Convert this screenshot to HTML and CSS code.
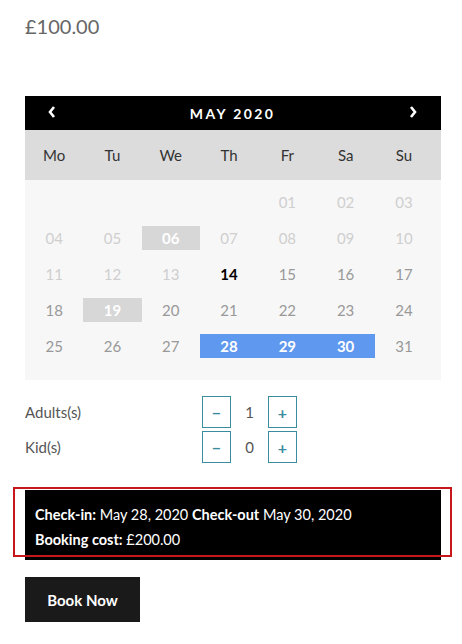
FILE: index.html
```html
<!DOCTYPE html>
<html>
<head>
  <title>Booking</title>
  <link rel="stylesheet" href="styles.css">
</head>
<body>
  <div class="price">£100.00</div>

  <div class="calendar">
    <div class="cal-head">
      <span class="cal-nav">
        <svg width="10" height="14" viewBox="0 0 10 14"><polyline points="7,2 3,7 7,12" fill="none" stroke="#fff" stroke-width="2.6"/></svg>
      </span>
      <span class="cal-month">MAY 2020</span>
      <span class="cal-nav">
        <svg width="10" height="14" viewBox="0 0 10 14"><polyline points="3,2 7,7 3,12" fill="none" stroke="#fff" stroke-width="2.6"/></svg>
      </span>
    </div>
    <div class="cal-week">
      <span>Mo</span><span>Tu</span><span>We</span><span>Th</span><span>Fr</span><span>Sa</span><span>Su</span>
    </div>
    <div class="cal-days">
      <span></span><span></span><span></span><span></span>
      <span class="past">01</span><span class="past">02</span><span class="past">03</span>
      <span class="past">04</span><span class="past">05</span><span class="booked">06</span><span class="past">07</span>
      <span class="past">08</span><span class="past">09</span><span class="past">10</span>
      <span class="past">11</span><span class="past">12</span><span class="past">13</span><span class="today">14</span>
      <span>15</span><span>16</span><span>17</span>
      <span>18</span><span class="booked">19</span><span>20</span><span>21</span>
      <span>22</span><span>23</span><span>24</span>
      <span>25</span><span>26</span><span>27</span><span class="selected">28</span>
      <span class="selected">29</span><span class="selected">30</span><span>31</span>
    </div>
  </div>

  <div class="guests">
    <div class="guest-row">
      <span class="guest-label">Adults(s)</span>
      <div class="counter">
        <button class="qty-btn">&minus;</button>
        <span class="qty">1</span>
        <button class="qty-btn">+</button>
      </div>
    </div>
    <div class="guest-row">
      <span class="guest-label">Kid(s)</span>
      <div class="counter">
        <button class="qty-btn">&minus;</button>
        <span class="qty">0</span>
        <button class="qty-btn">+</button>
      </div>
    </div>
  </div>

  <div class="summary">
    <div><b>Check-in:</b> May 28, 2020 <b>Check-out</b> May 30, 2020</div>
    <div><b>Booking cost:</b> £200.00</div>
    <div class="highlight"></div>
  </div>

  <button class="book-btn">Book Now</button>
</body>
</html>
```

FILE: styles.css
```css
body {
  margin: 0;
  padding: 13px 21px 0 25px;
  font-family: Lato, 'Open Sans', sans-serif;
  color: #555;
  background-color: #fff;
}

.price {
  font-size: 20px;
  color: #666;
  line-height: 26px;
  margin-bottom: 57px;
}

.calendar {
  width: 416px;
}

.cal-head {
  background-color: #000;
  height: 34px;
  display: flex;
  align-items: center;
  justify-content: space-between;
  padding: 0 23px 0 22px;
}

.cal-nav {
  display: flex;
  width: 10px;
  margin-top: -2px;
}

.cal-month {
  color: #fff;
  font-weight: 700;
  font-size: 14px;
  letter-spacing: 2.4px;
}

.cal-week {
  background-color: #dcdcdc;
  height: 50px;
  display: grid;
  grid-template-columns: repeat(7, 58.3px);
  align-items: center;
  font-size: 15px;
  color: #333;
}

.cal-week span,
.cal-days span {
  text-align: center;
}

.cal-days {
  background-color: #f7f7f7;
  display: grid;
  grid-template-columns: repeat(7, 58.3px);
  grid-auto-rows: 24px;
  row-gap: 12px;
  padding: 10px 0 22px;
  font-size: 15px;
  color: #999;
}

.cal-days span {
  line-height: 24px;
}

.cal-days .past {
  color: #cfcfcf;
}

.cal-days .today {
  color: #000;
  font-weight: 700;
}

.cal-days .booked {
  background-color: #d7d7d7;
  color: #fff;
  font-weight: 700;
}

.cal-days .selected {
  background-color: #5f98ef;
  color: #fff;
  font-weight: 700;
}

.guests {
  margin-top: 16px;
  display: flex;
  flex-direction: column;
  gap: 3px;
}

.guest-row {
  display: flex;
  align-items: center;
  height: 32px;
}

.guest-label {
  width: 177px;
  font-size: 15px;
  color: #555;
}

.counter {
  display: flex;
  align-items: center;
}

.qty-btn {
  width: 29px;
  height: 32px;
  border: 1px solid #3a8c9e;
  background: #fff;
  color: #3a8c9e;
  font-size: 16px;
  font-weight: 700;
  padding: 0;
  font-family: Lato, sans-serif;
}

.qty {
  width: 37px;
  text-align: center;
  font-size: 15px;
  color: #555;
}

.summary {
  position: relative;
  margin-top: 27px;
  width: 416px;
  box-sizing: border-box;
  height: 70px;
  background-color: #000;
  color: #fff;
  font-size: 14.5px;
  padding: 12px 10px 0;
  line-height: 25px;
}

.highlight {
  position: absolute;
  left: -12px;
  top: -3px;
  width: 439px;
  height: 70px;
  box-sizing: border-box;
  border: 2px solid #c8171c;
}

.book-btn {
  display: block;
  margin-top: 17px;
  width: 115px;
  height: 45px;
  background-color: #1a1a1a;
  color: #fff;
  border: none;
  font-family: Lato, sans-serif;
  font-weight: 700;
  font-size: 15px;
  padding: 0;
}
```
